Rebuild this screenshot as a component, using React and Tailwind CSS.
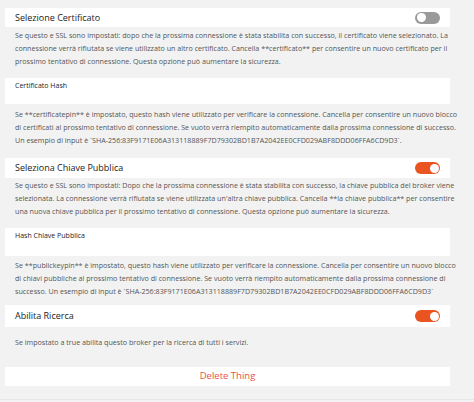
import React from "react";

function Toggle({ on }) {
  return (
    <div
      className={
        "w-[25px] h-[12px] rounded-full flex items-center px-[1.5px] " +
        (on ? "bg-[#e95420] justify-end" : "bg-[#9a9a9a] justify-start")
      }
    >
      <div className="w-[9px] h-[9px] rounded-full bg-white" />
    </div>
  );
}

function Header({ title, on, h }) {
  return (
    <div className={"bg-white flex items-center justify-between pl-[10px] pr-[10px] " + h}>
      <span className="text-[9px] leading-[12px] text-[#222]">{title}</span>
      <Toggle on={on} />
    </div>
  );
}

function InputBox({ label, h }) {
  return (
    <div className={"bg-white pl-[10px] pt-[3px] text-[7px] leading-[10px] font-medium text-[#222] " + h}>
      {label}
    </div>
  );
}

function Desc({ lines, mt }) {
  return (
    <div className={"pl-[10px] text-[7.15px] leading-[13px] text-[#555] " + mt}>
      {lines.map((l, i) => (
        <div key={i} className="whitespace-nowrap">
          {l}
        </div>
      ))}
    </div>
  );
}

export default function App() {
  return (
    <div
      className="w-[474px] h-[402px] bg-[#f2f2f2] overflow-hidden"
      style={{ fontFamily: '"Open Sans", "Noto Sans", sans-serif' }}
    >
      <div className="w-[445px] ml-[5px] pt-[8px] flex flex-col">
        <Header title="Selezione Certificato" on={false} h="h-[19px]" />
        <Desc
          mt="mt-[2px]"
          lines={[
            "Se questo e SSL sono impostati: dopo che la prossima connessione è stata stabilita con successo, il certificato viene selezionato. La",
            "connessione verrà rifiutata se viene utilizzato un altro certificato. Cancella **certificato** per consentire un nuovo certificato per il",
            "prossimo tentativo di connessione. Questa opzione può aumentare la sicurezza.",
          ]}
        />
        <div className="mt-[10px]">
          <InputBox label="Certificato Hash" h="h-[26px]" />
        </div>
        <Desc
          mt="mt-[4px]"
          lines={[
            "Se **certificatepin** è impostato, questo hash viene utilizzato per verificare la connessione. Cancella per consentire un nuovo blocco",
            "di certificati al prossimo tentativo di connessione. Se vuoto verrà riempito automaticamente dalla prossima connessione di successo.",
            "Un esempio di input è `SHA-256:83F9171E06A313118889F7D79302BD1B7A2042EE0CFD029ABF8DDD06FFA6CD9D3`.",
          ]}
        />
        <div className="mt-[11px]">
          <Header title="Seleziona Chiave Pubblica" on={true} h="h-[20px]" />
        </div>
        <Desc
          mt="mt-[1px]"
          lines={[
            "Se questo e SSL sono impostati: Dopo che la prossima connessione è stata stabilita con successo, la chiave pubblica del broker viene",
            "selezionata. La connessione verrà rifiutata se viene utilizzata un'altra chiave pubblica. Cancella **la chiave pubblica** per consentire",
            "una nuova chiave pubblica per il prossimo tentativo di connessione. Questa opzione può aumentare la sicurezza.",
          ]}
        />
        <div className="mt-[10px]">
          <InputBox label="Hash Chiave Pubblica" h="h-[28px]" />
        </div>
        <Desc
          mt="mt-[3px]"
          lines={[
            "Se **publickeypin** è impostato, questo hash viene utilizzato per verificare la connessione. Cancella per consentire un nuovo blocco",
            "di chiavi pubbliche al prossimo tentativo di connessione. Se vuoto verrà riempito automaticamente dalla prossima connessione di",
            "successo. Un esempio di input è `SHA-256:83F9171E06A313118889F7D79302BD1B7A2042EE0CFD029ABF8DDD06FFA6CD9D3`",
          ]}
        />
        <div className="mt-[7px]">
          <Header title="Abilita Ricerca" on={true} h="h-[22px]" />
        </div>
        <Desc
          mt="mt-[9px]"
          lines={["Se impostato a true abilita questo broker per la ricerca di tutti i servizi."]}
        />
        <button className="mt-[18px] h-[19px] bg-white text-[9.5px] text-[#e8504a] flex items-center justify-center">
          Delete Thing
        </button>
      </div>
      <div className="mt-[13px] border-t border-[#e6e6e6]" />
    </div>
  );
}
